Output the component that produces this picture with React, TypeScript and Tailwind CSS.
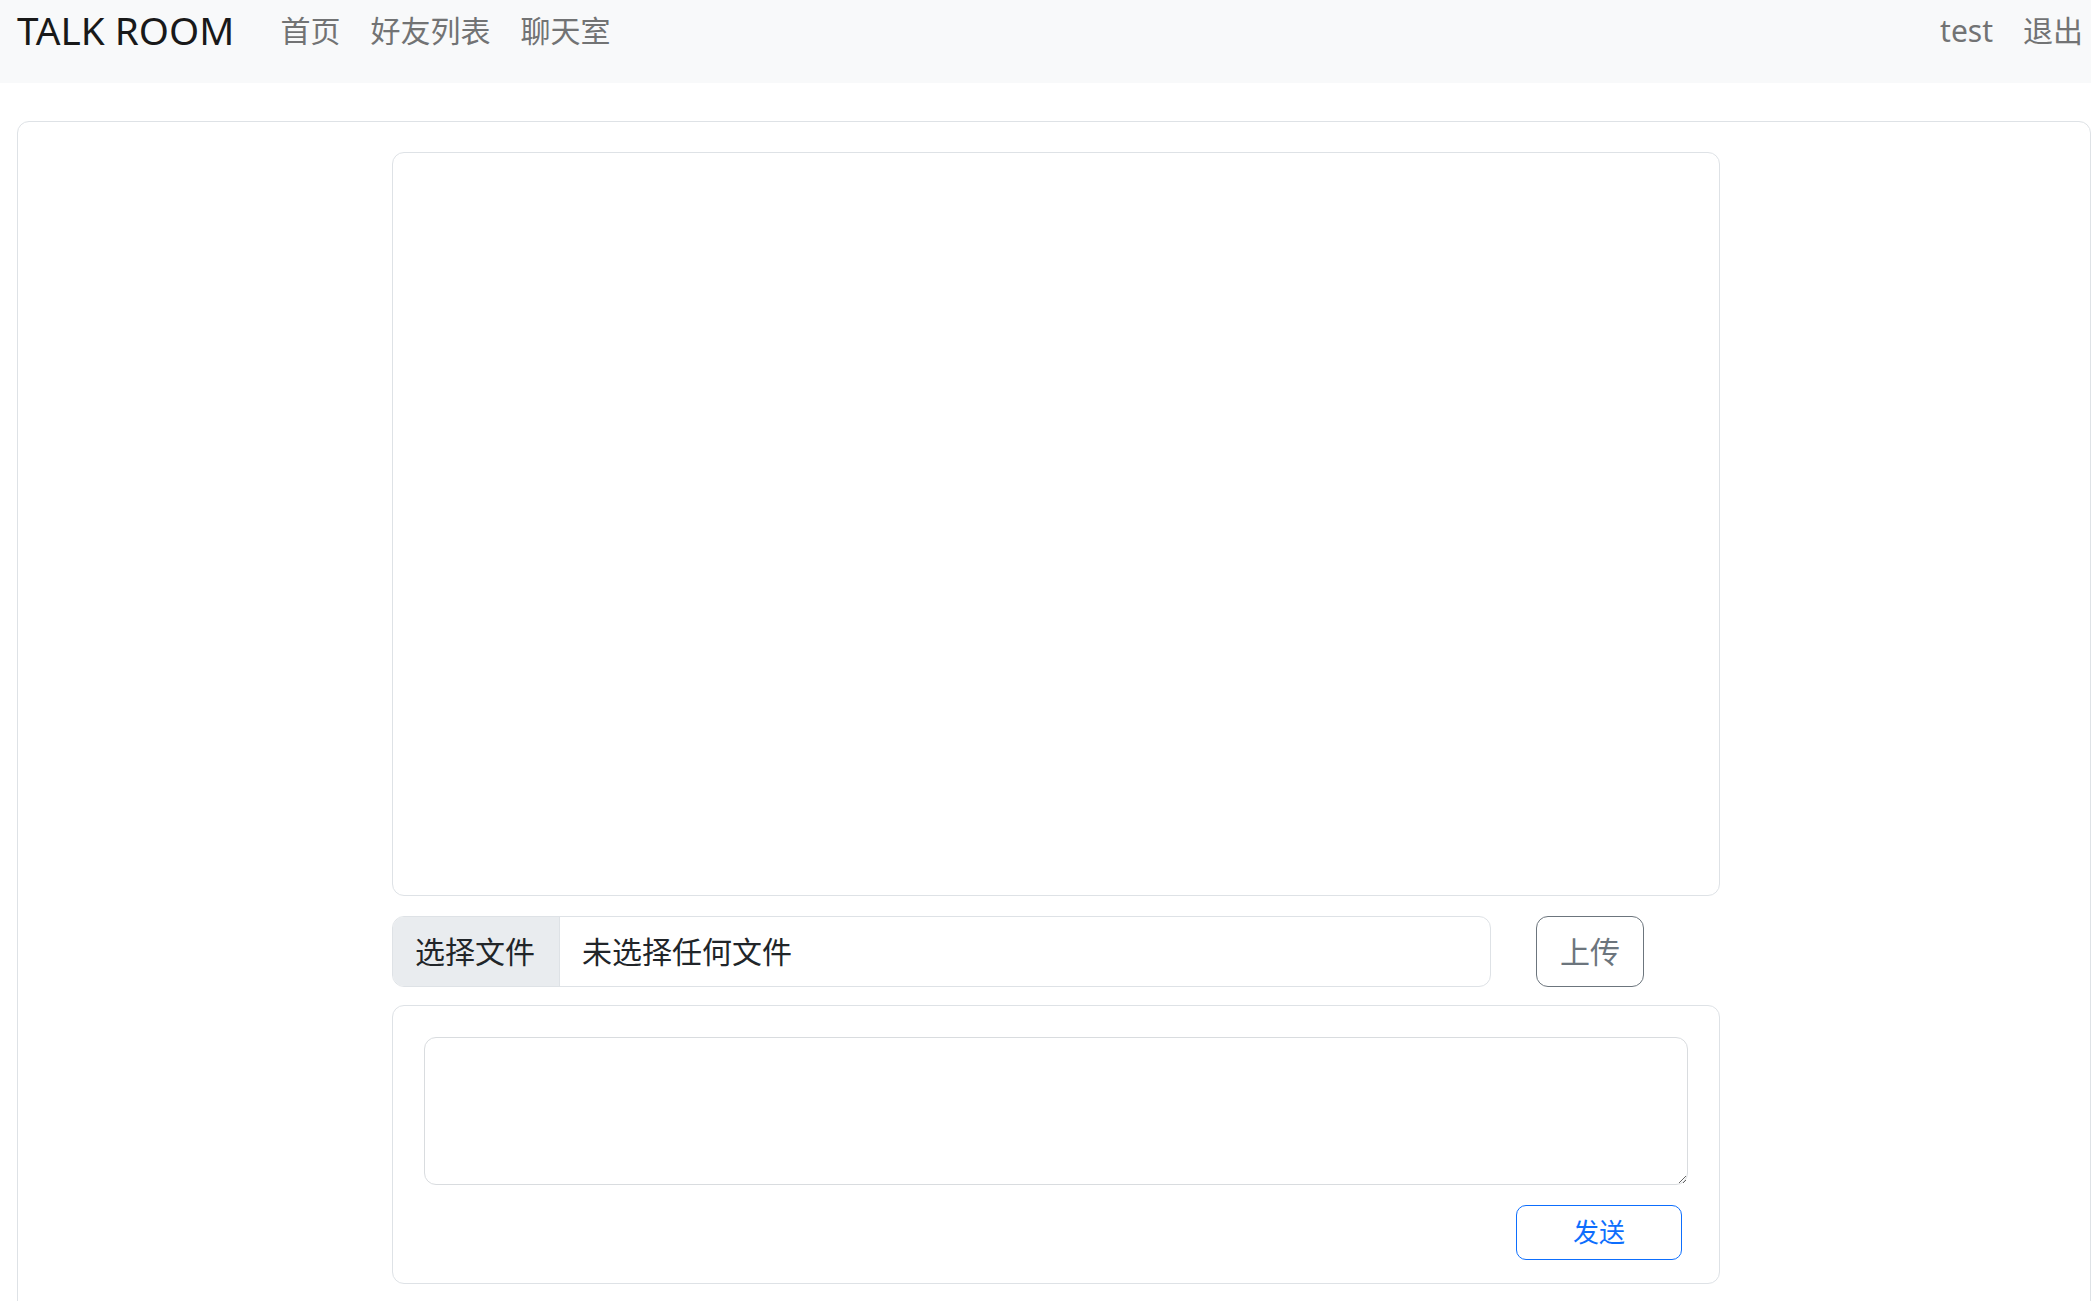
export default function App() {
  return (
    <div className="h-screen overflow-hidden bg-white font-['Noto_Sans','Noto_Sans_CJK_SC',sans-serif] text-[#212529]">
      {/* top navbar */}
      <nav className="flex h-[83px] items-start bg-[#f8f9fa] pl-[17px]">
        <a className="mr-[31px] mt-[2px] text-[38.7px] leading-[57px] text-[#191919]">TALK ROOM</a>
        <div className="mt-[8px] flex">
          <a className="px-[15px] text-[30px] leading-[45px] text-[#727374]">首页</a>
          <a className="px-[15px] text-[30px] leading-[45px] text-[#727374]">好友列表</a>
          <a className="px-[15px] text-[30px] leading-[45px] text-[#727374]">聊天室</a>
        </div>
        <div className="ml-auto mt-[8px] flex pr-[8px]">
          <a className="px-[15px] text-[30px] leading-[45px] text-[#727374]">test</a>
          <a className="pl-[15px] text-[30px] leading-[45px] text-[#727374]">退出</a>
        </div>
      </nav>

      <div className="ml-[17px] mt-[38px] w-[2074px] rounded-[12px] border border-[#dee2e6] pb-[30px] pl-[374px] pt-[30px]">
        {/* message list */}
        <div className="h-[744px] w-[1328px] rounded-[12px] border border-[#dee2e6]" />

        {/* file upload row */}
        <div className="mt-[20px] flex w-[1328px] items-center">
          <div className="flex h-[71px] w-[1099px] overflow-hidden rounded-[12px] border border-[#dee2e6] text-[30px]">
            <div className="flex w-[167px] items-center border-r border-[#dee2e6] bg-[#e9ecef] pl-[22px]">
              选择文件
            </div>
            <div className="flex items-center pl-[22px]">未选择任何文件</div>
          </div>
          <button className="ml-[45px] flex h-[71px] w-[108px] items-center justify-center rounded-[12px] border border-[#6c757d] text-[30px] text-[#6c757d]">
            上传
          </button>
        </div>

        {/* input box */}
        <div className="mt-[18px] flex w-[1328px] flex-col rounded-[12px] border border-[#dee2e6] px-[31px] pb-[23px] pt-[31px]">
          <textarea className="h-[148px] w-[1264px] rounded-[12px] border border-[#d9dcdf] outline-none" />
          <button className="mr-[6px] mt-[20px] flex h-[55px] w-[166px] items-center justify-center self-end rounded-[10px] border border-[#0d6efd] text-[26px] text-[#0d6efd]">
            发送
          </button>
        </div>
      </div>
    </div>
  )
}
